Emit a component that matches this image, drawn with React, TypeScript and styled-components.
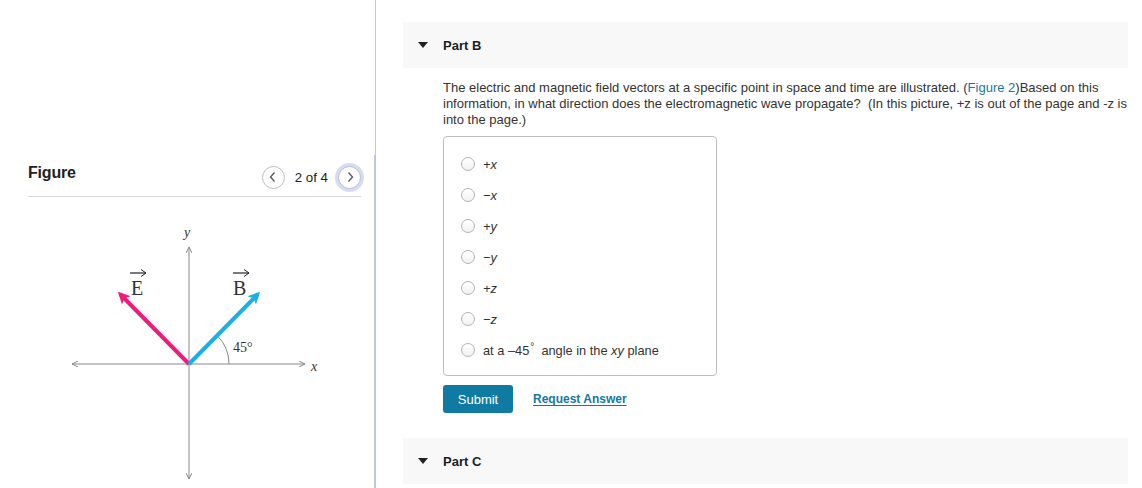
import React from 'react'
import styled, { createGlobalStyle } from 'styled-components'

const GlobalStyle = createGlobalStyle`
  html, body {
    margin: 0;
    padding: 0;
    background: #fff;
    font-family: "Liberation Sans", Arial, sans-serif;
    color: #222;
  }
`

const Page = styled.div`
  display: flex;
  width: 1142px;
  height: 488px;
  overflow: hidden;
`

const FigurePanel = styled.div`
  position: relative;
  width: 376px;
  flex: none;
  border-right: 1px solid #b7cbdc;
  box-sizing: border-box;
  padding: 162px 14px 0 28px;
`

const ScrollThumb = styled.div`
  position: absolute;
  right: 0;
  top: 155px;
  bottom: 0;
  width: 1px;
  background: #b7cbdc;
`

const FigureHeader = styled.div`
  display: flex;
  align-items: center;
  justify-content: space-between;
  height: 30px;
  border-bottom: 1px solid #d9d9d9;
  padding-bottom: 4px;
`

const FigureTitle = styled.h2`
  margin: 0 0 9px;
  font-size: 16px;
  font-weight: bold;
  color: #222;
  letter-spacing: -0.2px;
`

const Pager = styled.div`
  display: flex;
  align-items: center;
  gap: 10px;
  font-size: 13.3px;
  color: #222;
`

const NavButton = styled.button<{ $focused?: boolean }>`
  width: 23px;
  height: 23px;
  border-radius: 50%;
  border: 1px solid #bdbdbd;
  background: #fff;
  display: flex;
  align-items: center;
  justify-content: center;
  padding: 0;
  color: #444;
  box-shadow: ${p => (p.$focused ? '0 0 0 3px #d5dcf7' : 'none')};
`

const FigureArea = styled.div`
  padding: 25px 0 0 34px;
`

const Content = styled.div`
  flex: 1;
  padding: 22px 14px 0 27px;
`

const PartHeader = styled.div`
  display: flex;
  align-items: center;
  height: 46px;
  background: #f8f8f8;
  padding-left: 15px;
  gap: 15px;
  font-size: 13px;
  font-weight: bold;
  color: #222;
`

const Caret = styled.span`
  width: 0;
  height: 0;
  border-left: 5px solid transparent;
  border-right: 5px solid transparent;
  border-top: 6px solid #222;
`

const PartBody = styled.div`
  padding: 12px 0 0 40px;
`

const Question = styled.p`
  margin: 0 0 8px;
  font-size: 13px;
  line-height: 16px;
  color: #333;
`

const FigLink = styled.a`
  color: #1478a8;
  text-decoration: none;
`

const Options = styled.div`
  width: 274px;
  box-sizing: border-box;
  border: 1px solid #bdbdbd;
  border-radius: 4px;
  padding: 20px 0 18px 17px;
  display: flex;
  flex-direction: column;
  gap: 17px;
`

const Option = styled.label`
  display: flex;
  align-items: center;
  gap: 8px;
  font-size: 12.8px;
  color: #333;
  height: 14px;
`

const Radio = styled.span`
  width: 14px;
  height: 14px;
  box-sizing: border-box;
  border-radius: 50%;
  border: 1px solid #b3b3b3;
  background: linear-gradient(#fff, #f2f2f2);
  flex: none;
`

const Degree = styled.sup`
  font-size: 10px;
  margin-left: 1px;
`

const Actions = styled.div`
  display: flex;
  align-items: center;
  gap: 20px;
  margin-top: 9px;
`

const SubmitButton = styled.button`
  height: 28px;
  width: 70px;
  border: none;
  border-radius: 3px;
  background: #0f7ba2;
  color: #fff;
  font-family: inherit;
  font-size: 13px;
`

const RequestLink = styled.a`
  color: #1379a0;
  font-size: 12px;
  font-weight: bold;
  text-decoration: underline;
  text-underline-offset: 2px;
`

const PartSpacer = styled.div`
  height: 25px;
`

const MathText = styled.text<{ $italic?: boolean }>`
  font-family: "Liberation Serif", "DejaVu Serif", serif;
  font-style: ${p => (p.$italic ? 'italic' : 'normal')};
  fill: #333;
`

const Chevron: React.FC<{ dir: 'l' | 'r' }> = ({ dir }) => (
  <svg width="10" height="12" viewBox="0 0 10 12">
    <path
      d={dir === 'l' ? 'M6.5 1.5 L2.5 6 L6.5 10.5' : 'M3.5 1.5 L7.5 6 L3.5 10.5'}
      fill="none"
      stroke="#555"
      strokeWidth="1.3"
    />
  </svg>
)

const FieldDiagram = () => (
  <svg width="266" height="262" viewBox="0 0 266 262">
    <defs>
      <marker id="ax" markerWidth="8" markerHeight="6" refX="6" refY="3" orient="auto" markerUnits="userSpaceOnUse">
        <path d="M0 0 L6 3 L0 6" fill="none" stroke="#888" strokeWidth="1" />
      </marker>
      <marker id="hE" markerWidth="14" markerHeight="12" refX="9" refY="6" orient="auto" markerUnits="userSpaceOnUse">
        <path d="M0 0 L12 6 L0 12 L3 6 Z" fill="#ee1b7a" />
      </marker>
      <marker id="hB" markerWidth="14" markerHeight="12" refX="9" refY="6" orient="auto" markerUnits="userSpaceOnUse">
        <path d="M0 0 L12 6 L0 12 L3 6 Z" fill="#1aaeea" />
      </marker>
      <marker id="vec" markerWidth="7" markerHeight="8" refX="5" refY="4" orient="auto" markerUnits="userSpaceOnUse">
        <path d="M0 0.5 L5 4 L0 7.5" fill="none" stroke="#222" strokeWidth="1" />
      </marker>
    </defs>
    <line x1="127" y1="142" x2="10" y2="142" stroke="#888" strokeWidth="1" markerEnd="url(#ax)" />
    <line x1="127" y1="142" x2="243" y2="142" stroke="#888" strokeWidth="1" markerEnd="url(#ax)" />
    <line x1="127" y1="142" x2="127" y2="25" stroke="#888" strokeWidth="1" markerEnd="url(#ax)" />
    <line x1="127" y1="142" x2="127" y2="257" stroke="#888" strokeWidth="1" markerEnd="url(#ax)" />
    <path d="M167 142 A40 40 0 0 0 155.3 113.7" fill="none" stroke="#888" strokeWidth="1" />
    <line x1="127" y1="142" x2="58" y2="72" stroke="#ee1b7a" strokeWidth="4" markerEnd="url(#hE)" />
    <line x1="127" y1="142" x2="196" y2="72" stroke="#1aaeea" strokeWidth="4" markerEnd="url(#hB)" />
    <MathText x="122" y="15" fontSize="14" $italic>y</MathText>
    <MathText x="249" y="149" fontSize="14" $italic>x</MathText>
    <MathText x="171" y="130" fontSize="14">45°</MathText>
    <MathText x="69" y="73" fontSize="20">E</MathText>
    <line x1="68" y1="51" x2="84" y2="51" stroke="#222" strokeWidth="1.2" markerEnd="url(#vec)" />
    <MathText x="171" y="73" fontSize="20">B</MathText>
    <line x1="171" y1="51" x2="187" y2="51" stroke="#222" strokeWidth="1.2" markerEnd="url(#vec)" />
  </svg>
)

const choices: React.ReactNode[] = [
  <i>+x</i>,
  <i>−x</i>,
  <i>+y</i>,
  <i>−y</i>,
  <i>+z</i>,
  <i>−z</i>,
  <span>at a –45<Degree>°</Degree>&nbsp; angle in the <i>xy</i> plane</span>,
]

export default function App() {
  return (
    <>
      <GlobalStyle />
      <Page>
        <FigurePanel>
          <ScrollThumb />
          <FigureHeader>
            <FigureTitle>Figure</FigureTitle>
            <Pager>
              <NavButton aria-label="previous"><Chevron dir="l" /></NavButton>
              <span>2 of 4</span>
              <NavButton $focused aria-label="next"><Chevron dir="r" /></NavButton>
            </Pager>
          </FigureHeader>
          <FigureArea>
            <FieldDiagram />
          </FigureArea>
        </FigurePanel>
        <Content>
          <PartHeader>
            <Caret />
            Part B
          </PartHeader>
          <PartBody>
            <Question>
              The electric and magnetic field vectors at a specific point in space and time are illustrated. (
              <FigLink href="#">Figure 2</FigLink>)Based on this information, in what direction does the
              electromagnetic wave propagate?&nbsp; (In this picture, +z is out of the page and -z is into the page.)
            </Question>
            <Options>
              {choices.map((c, i) => (
                <Option key={i}>
                  <Radio />
                  {c}
                </Option>
              ))}
            </Options>
            <Actions>
              <SubmitButton>Submit</SubmitButton>
              <RequestLink href="#">Request Answer</RequestLink>
            </Actions>
          </PartBody>
          <PartSpacer />
          <PartHeader>
            <Caret />
            Part C
          </PartHeader>
        </Content>
      </Page>
    </>
  )
}
